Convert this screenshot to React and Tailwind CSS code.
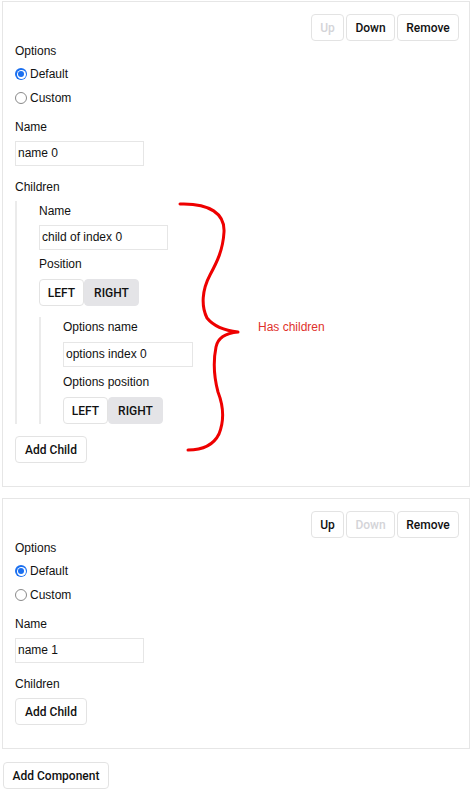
import React from 'react'

function Btn({ children, disabled, className = '' }) {
    return (
        <button
            className={
                "h-[27px] px-[8px] rounded-[4px] border border-[#e3e3e3] bg-white font-['Roboto',sans-serif] text-[12px] font-medium " +
                (disabled ? 'text-[#d4d4d8] ' : 'text-[#111] ') +
                className
            }
        >
            {children}
        </button>
    )
}

function Radio({ checked, label }) {
    return (
        <label className="flex items-center h-[24px] gap-[3px] text-[12px] text-[#111]">
            {checked ? (
                <span className="w-[12px] h-[12px] rounded-full bg-[#1a6ff0] flex items-center justify-center">
                    <span className="w-[9px] h-[9px] rounded-full bg-white flex items-center justify-center">
                        <span className="w-[6px] h-[6px] rounded-full bg-[#1a6ff0]" />
                    </span>
                </span>
            ) : (
                <span className="w-[12px] h-[12px] rounded-full border border-[#8a8a8a]" />
            )}
            {label}
        </label>
    )
}

function Label({ children, className = '' }) {
    return <div className={'h-[20px] leading-[20px] text-[12px] text-[#111] ' + className}>{children}</div>
}

function Field({ value, w = 'w-[129px]', className = '' }) {
    return (
        <div className={'h-[25px] border border-[#e6e6e6] px-[2px] text-[12px] leading-[23px] text-[#111] ' + w + ' ' + className}>
            {value}
        </div>
    )
}

function Toggle({ className = '' }) {
    return (
        <div className={"flex font-['Roboto',sans-serif] text-[12px] font-medium text-[#111] " + className}>
            <button className="h-[27px] w-[45px] rounded-[4px] border border-[#e3e3e3] bg-white">
                LEFT
            </button>
            <button className="h-[27px] w-[55px] rounded-[4px] border border-[#e4e4e7] bg-[#e4e4e7]">
                RIGHT
            </button>
        </div>
    )
}

function Brace() {
    return (
        <div className="absolute left-[174px] top-[196px] flex items-center">
            <svg width="66" height="258" viewBox="174 196 66 258" fill="none">
                <path
                    d="M177 202 C 207 201, 222 212, 221 230 C 220 248, 214 260, 207 273 C 199 288, 198 304, 204 316 C 212 326, 226 329, 235 330 C 225 331, 215 334, 213 345 C 210 360, 211 375, 215 390 C 222 408, 220 422, 216 432 C 210 444, 198 448, 185 448"
                    stroke="#ee0000"
                    strokeWidth="3"
                    strokeLinecap="round"
                    strokeLinejoin="round"
                />
            </svg>
            <span className="ml-[15px] text-[12px] text-[#e0312c]">Has children</span>
        </div>
    )
}

function Card({ index, first, last, nested }) {
    return (
        <div className="relative border border-[#e6e6e6] pl-3 pr-[10px] pt-3 pb-[23px]">
            <div className="flex justify-end gap-[2px]">
                <Btn disabled={first} className="w-[33px] px-0">Up</Btn>
                <Btn disabled={last} className="w-[49px] px-0">Down</Btn>
                <Btn className="w-[62px] px-0">Remove</Btn>
            </div>
            <Label>Options</Label>
            <div className="mt-[1px]">
                <Radio checked label="Default" />
                <Radio label="Custom" />
            </div>
            <Label className="mt-[7px]">Name</Label>
            <Field value={'name ' + index} className="mt-[4px]" />
            <Label className="mt-[11px]">Children</Label>
            {nested && (
                <div className="mt-[4px] border-l-2 border-[#ebebeb] pl-[22px]">
                    <Label>Name</Label>
                    <Field value="child of index 0" className="mt-[4px]" />
                    <Label className="mt-[4px]">Position</Label>
                    <Toggle className="mt-[5px]" />
                    <div className="mt-[11px] border-l-2 border-[#ebebeb] pl-[22px]">
                        <Label>Options name</Label>
                        <Field value="options index 0" w="w-[130px]" className="mt-[5px]" />
                        <Label className="mt-[5px]">Options position</Label>
                        <Toggle className="mt-[5px]" />
                    </div>
                </div>
            )}
            <Btn className={'w-[72px] px-0 ' + (nested ? 'mt-[12px]' : 'mt-[4px]')}>Add Child</Btn>
            {nested && <Brace />}
        </div>
    )
}

export default function App() {
    return (
        <div className="min-h-screen bg-white pl-[2px] pr-[4px] pt-[1px] font-['Liberation_Sans',Arial,sans-serif]">
            <Card index={0} first nested />
            <div className="mt-[11px]">
                <Card index={1} last />
            </div>
            <Btn className="mt-[13px] ml-[1px] w-[106px] px-0">Add Component</Btn>
        </div>
    )
}
